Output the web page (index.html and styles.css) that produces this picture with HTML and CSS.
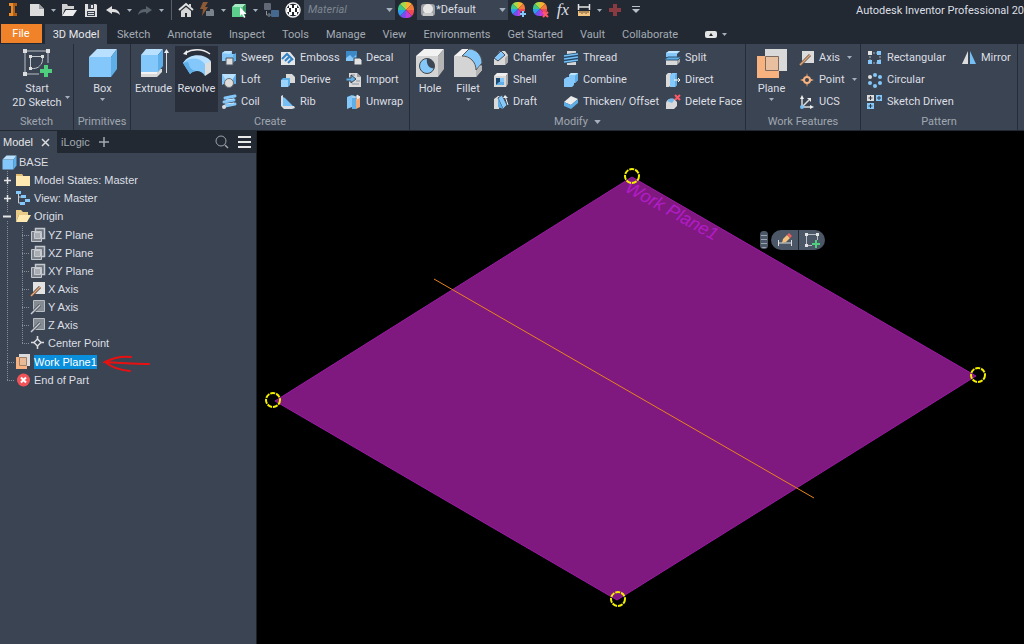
FILE: index.html
```html
<!DOCTYPE html>
<html lang="en">
<head>
<meta charset="utf-8">
<title>Autodesk Inventor Professional</title>
<link rel="stylesheet" href="styles.css">
</head>
<body>
<svg class="defs" aria-hidden="true">
  <symbol id="caret" viewBox="0 0 5 3"><path d="M0 0h5L2.500 3z" fill="#a4b0bd"/></symbol>
  <symbol id="wheel" viewBox="0 0 16 16">
    <path d="M8 8V0a8 8 0 0 1 6 2z" fill="#f9b233"/><path d="M8 8l6-6a8 8 0 0 1 2 6z" fill="#f47a3c"/>
    <path d="M8 8h8a8 8 0 0 1-2 6z" fill="#ef4b56"/><path d="M8 8l6 6a8 8 0 0 1-6 2z" fill="#c33bd8"/>
    <path d="M8 8v8a8 8 0 0 1-6-2z" fill="#7a4df0"/><path d="M8 8l-6 6a8 8 0 0 1-2-6z" fill="#2f9df0"/>
    <path d="M8 8H0a8 8 0 0 1 2-6z" fill="#3cc687"/><path d="M8 8L2 2a8 8 0 0 1 6-2z" fill="#a8d84a"/>
  </symbol>
  <symbol id="cube" viewBox="0 0 30 30"><path d="M1 9L9 1h20l-6 8z" fill="#b9e1ff"/><path d="M1 9h22v20H1z" fill="#84c8fb"/><path d="M23 9l6-8v20l-6 8z" fill="#5eaee8"/></symbol>
  <symbol id="plane" viewBox="0 0 16 16"><path d="M5.500 1.500h9v10h-9z" fill="#6c747f" stroke="#c4c8cd" stroke-width="1.500"/><path d="M1.500 4.500h10v10h-10z" fill="#7c838d" stroke="#c4c8cd"/><path d="M4.500 5.500h6v6h-6z" fill="#a9aeb5" stroke="#c9ccd0"/></symbol>
  <symbol id="axis" viewBox="0 0 16 16"><path d="M3.500 1.500h11v11h-11z" fill="#858b93" stroke="#b9bdc2"/><path d="M1 15l9-9" stroke="#444c58" stroke-width="3"/><path d="M1 15l9-9" stroke="#c9cdd2" stroke-width="1.500"/></symbol>
</svg>

<header class="titlebar">
  <div class="quick">
    <button class="qb logo" aria-label="Inventor menu"><svg width="10" height="16" viewBox="0 0 10 16"><path d="M1 1h8v3H7v7h2v3H1v-3h2V4H1z" fill="#e98b2f"/><path d="M5 1h4v3H7v7h2v3H5z" fill="#b45f16"/></svg></button>
    <button class="qb" aria-label="New"><svg width="16" height="16"><path d="M1 2h9l5 5v7H1z" fill="#dcdcdc"/><path d="M10 2v5h5z" fill="#9b9fa5"/></svg></button>
    <button class="qc" aria-label="New options"><svg width="5" height="3"><use href="#caret"/></svg></button>
    <button class="qb" aria-label="Open"><svg width="16" height="16"><path d="M1 2h5l1 2h6v3H4l-3 7z" fill="#cfcfcf"/><path d="M5 8h11l-4 6H1z" fill="#ededed"/></svg></button>
    <button class="qb" aria-label="Save"><svg width="16" height="16"><path d="M2 2h11l1 1v12H2z" fill="#e0e0e0"/><path d="M5 2h6v5H5z" fill="#39414e"/><path d="M8 3h2v3H8z" fill="#e0e0e0"/><path d="M4 9h8v5H4z" fill="#39414e"/><path d="M5 10h6v1H5zM5 12h6v1H5z" fill="#e0e0e0"/></svg></button>
    <button class="qb" aria-label="Undo"><svg width="16" height="16"><path d="M1 8l6-4v3c4 0 7 1 8 6-2-2-4-3-8-3v2z" fill="#e0e0e0"/></svg></button>
    <button class="qc" aria-label="Undo list"><svg width="5" height="3"><use href="#caret"/></svg></button>
    <button class="qb" aria-label="Redo"><svg width="16" height="16"><path d="M15 8L9 4v3c-4 0-7 1-8 6 2-2 4-3 8-3v2z" fill="#59616c"/></svg></button>
    <button class="qc" aria-label="Redo list"><svg width="5" height="3"><use href="#caret"/></svg></button>
    <span class="qsep"></span>
    <button class="qb slim" aria-label="Home"><svg width="16" height="16"><path d="M1 8l7-6 7 6" fill="none" stroke="#e2e2e2" stroke-width="2"/><path d="M11 2h2v4h-2zM3 9l5-4 5 4v6H9v-4H7v4H3z" fill="#d6d6d6"/></svg></button>
    <button class="qb" aria-label="Update"><svg width="16" height="16"><path d="M4 0h5L6 5h3l-6 9 1-7H1z" fill="#8d5a35"/><path d="M7 9h4v5H7zM11 7h3l1 2v5h-4z" fill="#7a828c"/></svg></button>
    <button class="qc" aria-label="Update options"><svg width="5" height="3"><use href="#caret"/></svg></button>
    <button class="qb" aria-label="Select"><svg width="16" height="16"><path d="M1 5l3-3h11l-3 3z" fill="#a7ebc4"/><path d="M1 5h11v10H1z" fill="#5bcf8b"/><path d="M12 5l3-3v10l-3 3z" fill="#36965f"/><path d="M9 5v9l2-2 2 4 1.500-1-2-3h3z" fill="#fff"/></svg></button>
    <button class="qc" aria-label="Select options"><svg width="5" height="3"><use href="#caret"/></svg></button>
    <button class="qb" aria-label="Links"><svg width="16" height="16"><rect x="1" y="1" width="7" height="7" rx="1" fill="#606975"/><rect x="8" y="8" width="8" height="7" rx="1" fill="#45688f"/><path d="M3.500 9v4h3M5.500 11l2 2-2 2" fill="none" stroke="#8c949e"/></svg></button>
    <button class="qb" aria-label="Material browser"><svg width="16" height="16"><circle cx="8" cy="8" r="7" fill="#1d232c" stroke="#f0f0f0" stroke-width="1.500"/><path d="M4 3h3v3H4zM9 3h3v3H9zM6 6h4v4H6zM2 6h2v4H2zM12 6h2v4h-2zM4 10h3v3H4zM9 10h3v3H9z" fill="#fff"/></svg></button>
    <span class="combo"><select class="field material" aria-label="Material"><option>Material</option></select><svg class="combo-caret" width="7" height="4" viewBox="0 0 5 3"><use href="#caret"/></svg></span>
    <button class="qb" aria-label="Appearance"><svg width="16" height="16"><use href="#wheel"/></svg></button>
    <span class="combo"><svg class="swatch" width="14" height="14"><rect y="1" width="14" height="12" rx="3" fill="#9da0a4"/><circle cx="7" cy="6" r="5" fill="#e6e6e6"/><path d="M2 10h10v3H2z" fill="#c6c8ca"/></svg><select class="field appearance" aria-label="Appearance"><option>*Default</option></select><svg class="combo-caret" width="7" height="4" viewBox="0 0 5 3"><use href="#caret"/></svg></span>
    <button class="qb" aria-label="Adjust appearance"><svg width="16" height="16"><use href="#wheel" width="14" height="14"/><path d="M12 9v6M9 12h6" stroke="#222933" stroke-width="3"/><path d="M12 9v6M9 12h6" stroke="#83c9ff" stroke-width="2"/></svg></button>
    <button class="qb" aria-label="Clear appearance"><svg width="16" height="16"><use href="#wheel" width="14" height="14"/><path d="M10 10l5 5M15 10l-5 5" stroke="#ff5964" stroke-width="2"/></svg></button>
    <button class="qb fx" aria-label="Parameters"><i>fx</i></button>
    <button class="qb slim" aria-label="Measure"><svg width="14" height="14"><path d="M1.500 1v6M12.500 1v6M2 4h10" stroke="#e4e4e4" stroke-width="1.500"/><path d="M1 8h12v5H1z" fill="#f3c583"/><path d="M3 8v2M5 8v3M7 8v2M9 8v3M11 8v2" stroke="#735733"/></svg></button>
    <button class="qc" aria-label="Measure options"><svg width="5" height="3"><use href="#caret"/></svg></button>
    <button class="qb" aria-label="Add"><svg width="12" height="12"><path d="M4 0h4v4h4v4H8v4H4V8H0V4h4z" fill="#8a3b41"/></svg></button>
    <button class="qb slim" aria-label="Customize"><svg width="8" height="8"><path d="M0 0h8v1H0zM0 3h8L4 7z" fill="#b8c0c9"/></svg></button>
  </div>
  <h1 class="app-title">Autodesk Inventor Professional 20</h1>
</header>

<nav class="tabs">
  <button class="tab file">File</button><button class="tab active">3D Model</button><button class="tab">Sketch</button><button class="tab">Annotate</button><button class="tab">Inspect</button><button class="tab">Tools</button><button class="tab">Manage</button><button class="tab">View</button><button class="tab">Environments</button><button class="tab">Get Started</button><button class="tab">Vault</button><button class="tab">Collaborate</button>
  <button class="ribbon-toggle" aria-label="Minimize ribbon"><svg width="12" height="7"><rect width="12" height="7" rx="2" fill="#e4e4e4"/><path d="M4 5l2-3 2 3z" fill="#222933"/></svg><svg width="5" height="3"><use href="#caret"/></svg></button>
</nav>

<section class="ribbon">
  <div class="panel">
    <div class="tools">
      <button class="big"><svg width="30" height="30"><path d="M3 3h23v23H3z" fill="none" stroke="#b9bec5"/><path d="M1 1h4v4H1zM24 1h4v4h-4zM1 24h4v4H1z" fill="#ddd"/><path d="M8.500 8.500h12v3c0 5-4 9-9 9h-3z" fill="none" stroke="#c4c9cf"/><path d="M7 7h3v3H7zM19 7h3v3h-3zM7 19h3v3H7z" fill="#ddd"/><path d="M17 19l4-4h9v15H17z" fill="#3b4453"/><path d="M22 17h4v4h4v4h-4v4h-4v-4h-4v-4h4z" fill="#4fce7d"/></svg><span>Start</span><span class="with-caret">2D Sketch<svg width="5" height="3"><use href="#caret"/></svg></span></button>
    </div>
    <h2 class="panel-name">Sketch</h2>
  </div>
  <div class="panel">
    <div class="tools">
      <button class="big"><svg width="30" height="30"><use href="#cube"/></svg><span>Box</span><svg class="below" width="5" height="3"><use href="#caret"/></svg></button>
    </div>
    <h2 class="panel-name">Primitives</h2>
  </div>
  <div class="panel">
    <div class="tools">
      <button class="big w43"><svg width="30" height="30"><path d="M2 24l4-2 17-1v3l-5 5H2z" fill="#d9d9d9"/><path d="M2 24h16v2H2z" fill="#f3f3f3"/><path d="M2 7l5-6h17l-5 6z" fill="#b9e1ff"/><path d="M2 7h17v17H2z" fill="#84c8fb"/><path d="M19 7l5-6v17l-5 6z" fill="#5eaee8"/><path d="M27.500 3v22" stroke="#ddd"/><path d="M25 5l2.500-4L30 5z" fill="#eee"/></svg><span>Extrude</span></button>
      <button class="big w43 pressed"><svg width="30" height="30"><path d="M1 15C7 5 22 5 29 13l-6 5C16 12 9 12 6 16z" fill="#b9e1ff"/><path d="M1 15c7-6 16-6 22 1v12c-3-5-10-7-15-2z" fill="#84c8fb"/><path d="M1 15l7 11c2-2 4-3 6-3-4-1-6-2-8-9z" fill="#5eaee8"/><path d="M23 16l6-3v11l-6 4z" fill="#ddd"/><path d="M3 5c7-4 17-5 25 1" fill="none" stroke="#eee" stroke-width="1.500"/><path d="M1 6l4-4v5z" fill="#eee"/></svg><span>Revolve</span></button>
      <div class="cols create">
        <button class="tool"><svg width="16" height="16"><path d="M1 3l3-2h7v3h4v7H1z" fill="#84c8fb"/><path d="M1 3l3-2h7l-2 3z" fill="#b9e1ff"/><path d="M12 5l3-2v7l-3 3z" fill="#5eaee8"/><path d="M5 8h7v7H5z" fill="#dedede" stroke="#4b5563"/></svg>Sweep</button>
        <button class="tool"><svg width="16" height="16"><path d="M1 2h14v10H1z" fill="#5eaee8"/><path d="M1 2h14l-5 8H5z" fill="#b9e1ff"/><path d="M1 2l5 8-5 3z" fill="#84c8fb"/><circle cx="8" cy="11" r="4.500" fill="#e0dcd8" stroke="#6a7078"/></svg>Loft</button>
        <button class="tool"><svg width="16" height="16"><path d="M4 4l10-2M3 8l10-2M4 12l10-2" stroke="#84c8fb" stroke-width="3" stroke-linecap="round"/><path d="M5 6l8-1M4 10l9-1" stroke="#c6e7ff"/><circle cx="3" cy="13" r="2" fill="#ddd"/></svg>Coil</button>
        <button class="tool"><svg width="16" height="16"><path d="M1 2h9l5 6v7H1z" fill="#e6e6e6"/><path d="M2 9l5-5 6 6M5 11l4-4M8 13l4-4" fill="none" stroke="#2f83c6" stroke-width="2"/></svg>Emboss</button>
        <button class="tool"><svg width="16" height="16"><path d="M6 2h6l3 3v6H6z" fill="#d9d9d9"/><path d="M1 8l2-2h7v7l-2 2H1z" fill="#5eaee8"/><path d="M1 8h7v7H1z" fill="#9bd3ff"/></svg>Derive</button>
        <button class="tool"><svg width="16" height="16"><path d="M1 2l2-1v11h11l1 2-3 1H4l-3-3z" fill="#d9dce0"/><path d="M3 12V3l2 1 8 8z" fill="#74bff5"/></svg>Rib</button>
        <button class="tool"><svg width="16" height="16"><path d="M0 1h11v10H0z" fill="#3d89c7"/><path d="M0 8l4-3 3 3 3-3v6H0z" fill="#84c8fb"/><path d="M8 8h6l2 2v5H8z" fill="#e2e2e2" stroke="#3b4453"/></svg>Decal</button>
        <button class="tool"><svg width="16" height="16"><path d="M3 1h8l4 4v10H3z" fill="#dadada"/><path d="M11 1v4h4z" fill="#9b9fa5"/><path d="M5 3h4M6 12h7M10 9h4" stroke="#8a9098"/><path d="M0 6h5V3l5 4-5 4V9H0z" fill="#5faee6" stroke="#3b4453"/></svg>Import</button>
        <button class="tool"><svg width="16" height="16"><path d="M1 3l5-2v12l-5 2z" fill="#84c8fb"/><path d="M6 1c4 0 5 3 4 14H6z" fill="#5eaee8"/><path d="M10 5l4-2v10l-4 2z" fill="#f0a878"/><path d="M6 3h5M11 1l3 2-3 2z" stroke="#eee" fill="#eee"/></svg>Unwrap</button>
      </div>
    </div>
    <h2 class="panel-name">Create</h2>
  </div>
  <div class="panel">
    <div class="tools">
      <button class="big w38"><svg width="30" height="30"><path d="M1 8l8-7h20l-6 7z" fill="#f2f2f2"/><path d="M1 8h22v21H1z" fill="#d4d4d4"/><path d="M23 8l6-7v20l-6 8z" fill="#b5b5b5"/><circle cx="12" cy="18" r="7.500" fill="#84c8fb" stroke="#444"/><path d="M12 10.500a7.500 7.500 0 0 1 7 10c-5 0-8-4-7-10z" fill="#3d4654"/></svg><span>Hole</span></button>
      <button class="big w38"><svg width="30" height="30"><path d="M1 8l8-7h8l8 8 4 13-6 7H1z" fill="#f2f2f2"/><path d="M1 8h8c8 0 14 6 14 14v7H1z" fill="#d4d4d4"/><path d="M23 22l6-5v5l-6 7z" fill="#b5b5b5"/><path d="M9 8l7-7c7 0 13 6 13 14l-6 7c0-8-6-14-14-14z" fill="#84c8fb" stroke="#555"/></svg><span>Fillet</span><svg class="below" width="5" height="3"><use href="#caret"/></svg></button>
      <div class="cols modify">
        <button class="tool"><svg width="16" height="16"><path d="M7 1h5l3 4v7l-3 3H1V9z" fill="#d9d9d9"/><path d="M12 8l3-3v7l-3 3z" fill="#aaa"/><path d="M1 8l7-7 4 4-7 6z" fill="#84c8fb" stroke="#47505e"/></svg>Chamfer</button>
        <button class="tool"><svg width="16" height="16"><path d="M1 4l3-3h11l-2 3z" fill="#f0f0f0"/><path d="M1 4h12v11H1z" fill="#d9d9d9"/><path d="M13 4l2-3v11l-2 3z" fill="#aaa"/><path d="M3 6h8v7H3z" fill="#1e4a72"/><path d="M7 6h4v5H7z" fill="#84c8fb"/><path d="M3 13l3-3h5v3z" fill="#5eaee8"/></svg>Shell</button>
        <button class="tool"><svg width="16" height="16"><path d="M1 5l4-3h3l-2 13H1z" fill="#dadada"/><path d="M5 4l4-3 5 10-4 4z" fill="#84c8fb" stroke="#47505e"/><path d="M5 4v9l5 2z" fill="#5eaee8"/><path d="M12 2l3 9" stroke="#eee"/><path d="M10 4l2-3 3 3z" fill="#eee"/></svg>Draft</button>
        <button class="tool"><svg width="16" height="16"><path d="M4 1h9v14H4z" fill="#d6d6d6"/><path d="M1 6l14-2M1 9l14-2M1 12l14-2" stroke="#254b6c" stroke-width="3"/><path d="M1 6l14-2M1 9l14-2M1 12l14-2" stroke="#74bff5" stroke-width="1.500"/></svg>Thread</button>
        <button class="tool"><svg width="16" height="16"><path d="M1 7l3-2h2V3l2-2h7v7l-3 3h-1v2l-2 2H1z" fill="#84c8fb"/><path d="M12 4l3-3v7l-3 3z" fill="#5eaee8"/><path d="M6 3l2-2h7l-3 2z" fill="#c2e5ff"/></svg>Combine</button>
        <button class="tool"><svg width="16" height="16"><path d="M1 8l7-6 7 3-7 6z" fill="#ececec"/><path d="M1 8l7 3v4l-7-3zM8 11l7-6v4l-7 6z" fill="#5eaee8"/></svg>Thicken/ Offset</button>
        <button class="tool"><svg width="16" height="16"><path d="M1 3l3-2h11l-3 3v3H1z" fill="#84c8fb"/><path d="M1 3l3-2h11l-3 2z" fill="#c2e5ff"/><path d="M1 10h11v5H1z" fill="#d9d9d9"/><path d="M12 10l3-3v5l-3 3z" fill="#aaa"/><path d="M0 9l3-2h13l-3 3H0z" fill="#5eaee8" stroke="#31526e"/></svg>Split</button>
        <button class="tool"><svg width="16" height="16"><path d="M1 3l2-2h3v12l-2 2H1z" fill="#dadada"/><path d="M5 3l2-2h5v12l-2 2H5z" fill="#84c8fb"/><path d="M10 3l2-2v12l-2 2z" fill="#5eaee8"/><path d="M9 8h6M13 6l2 2-2 2" stroke="#fff" fill="none"/></svg>Direct</button>
        <button class="tool"><svg width="16" height="16"><path d="M1 10c0-4 3-6 8-5l3 3v4l-3 3H1z" fill="#d9d9d9"/><path d="M2 7c2-3 5-3 8-2l-3 4z" fill="#74b9ea"/><path d="M10 1l5 5M15 1l-5 5" stroke="#ff5964" stroke-width="2"/></svg>Delete Face</button>
      </div>
    </div>
    <h2 class="panel-name">Modify <svg width="7" height="4" viewBox="0 0 5 3"><use href="#caret"/></svg></h2>
  </div>
  <div class="panel">
    <div class="tools">
      <button class="big w50"><svg width="30" height="30"><path d="M8 1h22v22H8z" fill="#d9d9d9"/><path d="M0 8h22v22H0z" fill="#f8b280"/><path d="M8.500 8.500h13v14h-13z" fill="#e8c0a0" stroke="#7c6a60"/></svg><span>Plane</span><svg class="below" width="5" height="3"><use href="#caret"/></svg></button>
      <div class="cols work">
        <button class="tool"><svg width="16" height="16"><path d="M3 1h12v12H3z" fill="#dcdcdc"/><path d="M1 15L11 5" stroke="#65584e" stroke-width="3"/><path d="M1 15L11 5" stroke="#e5a273" stroke-width="1.500"/></svg>Axis<svg class="after" width="5" height="3"><use href="#caret"/></svg></button>
        <button class="tool"><svg width="16" height="16"><path d="M8 1l1 5 6 2-6 2-1 5-1-5-6-2 6-2z" fill="#f8b280"/><circle cx="8" cy="8" r="4" fill="#f8b280"/><circle cx="8" cy="8" r="2" fill="#3b4453"/></svg>Point<svg class="after" width="5" height="3"><use href="#caret"/></svg></button>
        <button class="tool"><svg width="16" height="16"><path d="M3 4v9h9M3 13l7-7" fill="none" stroke="#ddd" stroke-width="1.500"/><path d="M1 5l2-4 2 4zM11 11l4 2-4 2zM8 4h4v4z" fill="#eee"/><circle cx="3" cy="13" r="2" fill="#74bff5"/></svg>UCS</button>
      </div>
    </div>
    <h2 class="panel-name">Work Features</h2>
  </div>
  <div class="panel">
    <div class="tools">
      <div class="cols pattern">
        <button class="tool"><svg width="16" height="16"><path d="M3 3h10M3 13h10M3 3v10M13 3v10" stroke="#a5adb7" stroke-dasharray="2 1"/><path d="M1 1h4v4H1z" fill="#e2e2e2"/><path d="M10 1h4v4h-4zM1 10h4v4H1zM10 10h4v4h-4z" fill="#84c8fb"/></svg>Rectangular</button>
        <button class="tool"><svg width="16" height="16"><g fill="#84c8fb"><circle cx="8" cy="3" r="2"/><circle cx="13" cy="5" r="2"/><circle cx="13" cy="11" r="2"/><circle cx="8" cy="14" r="2"/><circle cx="3" cy="11" r="2"/></g><circle cx="3" cy="5" r="2" fill="#ddd"/></svg>Circular</button>
        <button class="tool"><svg width="16" height="16"><path d="M0 1h7v6H0z" fill="#ddd"/><path d="M9 1h6v6H9zM0 9h7v6H0z" fill="#84c8fb"/><path d="M3.500 2v4M1.500 4h4M12 2v4M10 4h4M3.500 10v4M1.500 12h4" stroke="#303947"/></svg>Sketch Driven</button>
        <button class="tool"><svg width="16" height="16"><path d="M7 1v13H1z" fill="#ddd"/><path d="M9 1v13h6z" fill="#74bff5"/></svg>Mirror</button>
      </div>
    </div>
    <h2 class="panel-name">Pattern</h2>
  </div>
  <div class="panel"></div>
</section>

<main class="workspace">
  <aside class="browser">
    <div class="browser-tabs">
      <button class="btab on">Model<svg width="9" height="9"><path d="M1 1l7 7M8 1L1 8" stroke="#d8dadd" stroke-width="1.500"/></svg></button>
      <button class="btab">iLogic</button>
      <button class="bicon" aria-label="Add tab"><svg width="10" height="10"><path d="M5 0v10M0 5h10" stroke="#a3a9b1" stroke-width="1.500"/></svg></button>
      <button class="bicon push" aria-label="Search"><svg width="14" height="14"><circle cx="6" cy="6" r="5" fill="none" stroke="#9ea3aa"/><path d="M10 10l3 3" stroke="#9ea3aa" stroke-width="1.500"/></svg></button>
      <button class="bicon" aria-label="Browser menu"><svg width="13" height="12"><path d="M0 1h13M0 6h13M0 11h13" stroke="#e8e8e8" stroke-width="2"/></svg></button>
    </div>
    <ul class="tree">
      <li class="node root"><svg width="15" height="15"><use href="#cube"/></svg><span class="name">BASE</span></li>
      <li class="node"><button class="rail v" aria-label="Expand"><svg width="15" height="9"><path d="M3 0h9v9H3z" fill="#3b4453"/><path d="M7.500 1v7M4 4.500h7" stroke="#e6e6e6" stroke-width="1.500"/></svg></button><svg width="16" height="16"><path d="M1 2h6l1 2h7v10H1z" fill="#ffe9b0"/><path d="M1 2h6l1 2H1z" fill="#e0bd72"/></svg><span class="name">Model States: Master</span></li>
      <li class="node"><button class="rail v" aria-label="Expand"><svg width="15" height="9"><path d="M3 0h9v9H3z" fill="#3b4453"/><path d="M7.500 1v7M4 4.500h7" stroke="#e6e6e6" stroke-width="1.500"/></svg></button><svg width="16" height="16"><path d="M3.500 3v10h4M3.500 7h4" fill="none" stroke="#c9cdd2"/><path d="M1 1h5v3H1zM6 5h5v3H6zM10 9h5v3h-5zM5 12h5v3H5z" fill="#84c8fb"/></svg><span class="name">View: Master</span></li>
      <li>
        <div class="node"><button class="rail v" aria-label="Collapse"><svg width="15" height="9"><path d="M3 0h9v9H3z" fill="#3b4453"/><path d="M3 4.500h8" stroke="#e6e6e6" stroke-width="2"/></svg></button><svg width="16" height="16"><path d="M1 2h5l2 2h5v3H4l-3 7z" fill="#e8cb88"/><path d="M4 7h12l-4 7H1z" fill="#ffe9b0"/></svg><span class="name">Origin</span></div>
        <ul class="branch">
          <li class="node"><span class="rail v"></span><span class="rail v h"></span><svg width="16" height="16"><use href="#plane"/></svg><span class="name">YZ Plane</span></li>
          <li class="node"><span class="rail v"></span><span class="rail v h"></span><svg width="16" height="16"><use href="#plane"/></svg><span class="name">XZ Plane</span></li>
          <li class="node"><span class="rail v"></span><span class="rail v h"></span><svg width="16" height="16"><use href="#plane"/></svg><span class="name">XY Plane</span></li>
          <li class="node"><span class="rail v"></span><span class="rail v h"></span><svg width="16" height="16"><path d="M3 1h12v12H3z" fill="#e2e2e2"/><path d="M1 15l9-9" stroke="#51463e" stroke-width="3"/><path d="M1 15l9-9" stroke="#eba777" stroke-width="1.500"/></svg><span class="name">X Axis</span></li>
          <li class="node"><span class="rail v"></span><span class="rail v h"></span><svg width="16" height="16"><use href="#axis"/></svg><span class="name">Y Axis</span></li>
          <li class="node"><span class="rail v"></span><span class="rail v h"></span><svg width="16" height="16"><use href="#axis"/></svg><span class="name">Z Axis</span></li>
          <li class="node"><span class="rail v"></span><span class="rail v h end"></span><svg width="16" height="16"><path d="M7.500 1v4M7.500 10v4M1 7.500h4M10 7.500h4" stroke="#d8dadd" stroke-width="1.500"/><path d="M7.500 4L11 7.500 7.500 11 4 7.500z" fill="none" stroke="#d8dadd" stroke-width="1.500"/></svg><span class="name">Center Point</span></li>
        </ul>
      </li>
      <li class="node"><span class="rail v h"></span><svg width="16" height="16"><path d="M4 0h11v12H4z" fill="#dcdcdc"/><path d="M1 3h11v12H1z" fill="#f8b280"/><path d="M4.500 3.500h7v8h-7z" fill="#e8bb98" stroke="#9e8069"/></svg><span class="name selected">Work Plane1</span><svg class="mark" width="48" height="18" viewBox="0 0 48 18"><path d="M46 10C34 10 22 9 2 8C10 4 18 2 28 3M2 8c6 5 14 8 25 9" fill="none" stroke="#e81010" stroke-width="2" stroke-linecap="round"/></svg></li>
      <li class="node"><span class="rail v h end"></span><svg width="16" height="16"><circle cx="8.500" cy="8" r="6.500" fill="#f25358"/><path d="M6 5.500l5 5M11 5.500l-5 5" stroke="#fff" stroke-width="2"/></svg><span class="name">End of Part</span></li>
    </ul>
  </aside>

  <section class="viewport">
    <svg class="scene" viewBox="0 0 767 513" preserveAspectRatio="xMinYMin meet" role="img" aria-label="Work plane preview">
      <path d="M375 46L719 245 360 469 18 270z" fill="#80197f" stroke="#9c1aa6"/>
      <text class="plane-label" transform="translate(367 60) rotate(29)">Work Plane1</text>
      <path d="M177 148L557 367" stroke="#e8841c"/>
      <g fill="none" stroke="#f4f000" stroke-width="2" stroke-dasharray="5 1"><circle cx="375" cy="45" r="7"/><circle cx="721" cy="244" r="7"/><circle cx="361" cy="468" r="7"/><circle cx="16" cy="269" r="7"/></g>
    </svg>
    <div class="mini">
      <span class="grip"></span>
      <div class="pill">
        <button class="mini-btn" aria-label="Edit dimension"><svg width="16" height="16"><path d="M1.500 8v6M14.500 8v6M2 11h12" stroke="#ddd"/><path d="M5 11l1-4 4-4 3 3-4 4z" fill="#f4c27c"/><path d="M10 3l2-2 3 3-2 2z" fill="#e8605b"/></svg></button>
        <button class="mini-btn" aria-label="New sketch"><svg width="16" height="16"><path d="M2.500 2.500h11v11h-11z" fill="none" stroke="#b9bec5"/><path d="M1 1h3v3H1zM12 1h3v3h-3zM1 12h3v3H1z" fill="#e4e4e4"/><path d="M8 8h8v8H8z" fill="#4b5666"/><path d="M12 8v8M8 12h8" stroke="#4fce7d" stroke-width="2"/></svg></button>
      </div>
    </div>
  </section>
</main>
</body>
</html>
```
FILE: styles.css
```css
* { box-sizing: border-box; }
body {
  margin: 0;
  height: 100vh;
  display: flex;
  flex-direction: column;
  overflow: hidden;
  background: #222933;
  color: #dcdfe3;
  font: 11px/14px Roboto, "Open Sans", sans-serif;
}
button, select { font: inherit; color: inherit; border: 0; background: none; padding: 0; margin: 0; white-space: nowrap; }
button { display: flex; align-items: center; justify-content: center; }
h1, h2 { margin: 0; font: inherit; }
ul { list-style: none; margin: 0; padding: 0; }
svg { flex: none; display: block; }
.defs { position: absolute; width: 0; height: 0; }

.titlebar { display: flex; flex: none; height: 24px; justify-content: space-between; overflow: hidden; }
.quick { display: flex; height: 20px; }
.qb { width: 22px; }
.qb.logo { width: 26px; }
.qb.slim { width: 20px; }
.qc { width: 10px; }
.qsep { width: 10px; background: linear-gradient(#59606a, #59606a) 5px 0 / 1px 100% no-repeat; }
.fx { font: 17px/18px "Liberation Serif", serif; }
.combo { position: relative; display: flex; width: 91px; background: #3b4453; }
.field { appearance: none; width: 100%; outline: 0; }
.material { padding-left: 4px; font-style: italic; color: #7d8691; }
.appearance { padding-left: 1px; }
.swatch { margin: 3px 0 0 4px; }
.combo-caret { position: absolute; right: 2px; top: 8px; }
.app-title { padding-top: 4px; white-space: nowrap; }

.tabs { display: flex; flex: none; height: 20px; padding-left: 1px; color: #a4abb4; }
.tab { padding: 1px 9px 0 8px; }
.tab.file { width: 41px; height: 19px; margin-right: 3px; background: #f0832a; color: #fff; }
.tab.active { width: 62px; padding: 1px 0 0; margin-right: 2px; background: #3b4453; color: #e6e8ea; }
.ribbon-toggle { margin-left: 18px; gap: 5px; }

.ribbon {
  display: grid;
  flex: none;
  grid-template-columns: 74px 57px 279px 336px 115px 157px 1fr;
  height: 87px;
  background: #3b4453;
  border-bottom: 1px solid #222933;
}
.panel { display: flex; flex-direction: column; min-width: 0; padding-top: 2px; border-right: 1px solid #252c37; }
.panel:last-child { border-right: 0; }
.tools { display: flex; flex: none; height: 66px; padding-left: 1px; }
.panel-name { display: flex; justify-content: center; align-items: center; gap: 6px; height: 19px; color: #a0a7b0; }
.big { flex-direction: column; justify-content: flex-start; flex: 1; padding-top: 2px; }
.big > svg:first-child { margin-bottom: 4px; }
.big .below { margin-top: 2px; }
.with-caret { display: flex; gap: 3px; padding-left: 8px; }
.w43 { flex: none; width: 43px; }
.w38 { flex: none; width: 38px; }
.w50 { flex: none; width: 49px; }
.pressed { background: #29303b; }
.cols { display: grid; grid-auto-flow: column; grid-template-rows: repeat(3, 22px); }
.create { grid-template-columns: 59px 66px 60px; padding-left: 3px; }
.modify { grid-template-columns: 70px 102px 78px; padding-left: 6px; }
.work { padding-left: 3px; }
.pattern { grid-template-columns: 94px 56px; padding-left: 5px; }
.tool { justify-content: flex-start; gap: 4px; padding-top: 1px; }
.after { margin-left: 3px; }

.workspace { display: flex; flex: 1; min-height: 0; }
.browser { flex: none; width: 257px; background: #3b4453; border-right: 1px solid #1b2029; font: 11px/14px "Liberation Sans", Arial, sans-serif; }
.browser-tabs { display: flex; height: 22px; background: #222933; }
.btab { padding: 0 4px; color: #a3a9b1; }
.btab.on { width: 57px; padding: 0 0 0 3px; gap: 8px; justify-content: flex-start; background: #3b4453; color: #e6e8ea; }
.bicon { width: 20px; }
.push { margin-left: auto; }
.bicon:last-child { width: 24px; }
.node { position: relative; display: flex; align-items: center; height: 18px; }
.root { padding-left: 2px; }
.branch { padding: 1px 0; }
.rail { flex: none; width: 15px; height: 18px; background-repeat: no-repeat; }
.rail.v { background-image: repeating-linear-gradient(#858d98 0 1px, transparent 1px 2px); background-size: 1px 100%; background-position: 7px 0; }
.rail.h {
  background-image: repeating-linear-gradient(#858d98 0 1px, transparent 1px 2px), repeating-linear-gradient(90deg, #858d98 0 1px, transparent 1px 2px);
  background-size: 1px 100%, 8px 1px;
  background-position: 7px 0, 7px 9px;
}
.rail.end { background-size: 1px 9px, 8px 1px; }
.name { margin-left: 3px; }
.root .name, .branch .name { margin-left: 2px; }
.selected { background: #0a8fdc; color: #fff; }
.mark { position: absolute; left: 103px; top: 1px; }

.viewport { position: relative; flex: 1; min-width: 0; background: #000; overflow: hidden; }
.scene { width: 100%; height: 100%; }
.plane-label { font: italic 18px "Liberation Sans", Arial, sans-serif; fill: #b01cc6; }
.mini { position: absolute; left: 503px; top: 99px; display: flex; align-items: center; gap: 3px; }
.grip { width: 8px; height: 18px; border-radius: 3px; background: repeating-linear-gradient(#4b5666 0 3px, #9aa3ae 3px 4px); border: 1px solid #4b5666; }
.pill { display: flex; border-radius: 10px; overflow: hidden; background: #4b5666; }
.mini-btn { width: 27px; height: 20px; }
.mini-btn + .mini-btn { border-left: 1px solid #20262f; }
```
